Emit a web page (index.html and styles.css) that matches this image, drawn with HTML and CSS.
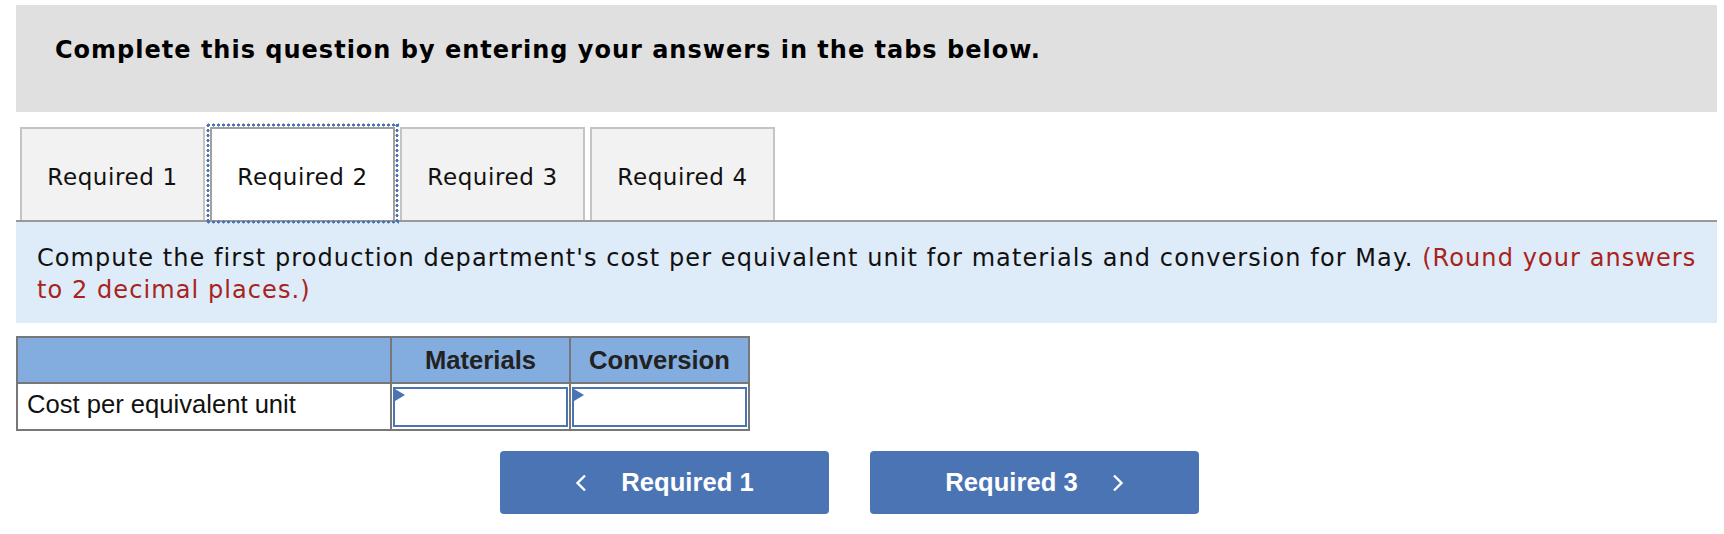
FILE: index.html
```html
<!DOCTYPE html>
<html lang="en">
<head>
    <meta charset="UTF-8">
    <title>Required 2</title>
    <link rel="stylesheet" href="styles.css">
</head>
<body>
    <div class="question">
        <div class="banner">Complete this question by entering your answers in the tabs below.</div>

        <div class="tabs">
            <div class="tab">Required 1</div>
            <div class="tab active">Required 2</div>
            <div class="tab">Required 3</div>
            <div class="tab">Required 4</div>
        </div>

        <div class="prompt">
            Compute the first production department's cost per equivalent unit for materials and conversion for May.
            <span class="hint">(Round your answers to 2 decimal places.)</span>
        </div>

        <table class="answer-table">
            <colgroup>
                <col class="col-label">
                <col class="col-value">
                <col class="col-value">
            </colgroup>
            <tr>
                <th></th>
                <th>Materials</th>
                <th>Conversion</th>
            </tr>
            <tr>
                <td class="label">Cost per equivalent unit</td>
                <td class="entry"><div class="field"><input type="text"></div></td>
                <td class="entry"><div class="field"><input type="text"></div></td>
            </tr>
        </table>

        <div class="nav">
            <button type="button" class="nav-btn">
                <svg width="12" height="18" viewBox="0 0 12 18"><polyline points="10,1.5 2.5,9 10,16.5" fill="none" stroke="#fff" stroke-width="2.4"/></svg>
                <span>Required 1</span>
            </button>
            <button type="button" class="nav-btn">
                <span>Required 3</span>
                <svg width="12" height="18" viewBox="0 0 12 18"><polyline points="2,1.5 9.5,9 2,16.5" fill="none" stroke="#fff" stroke-width="2.4"/></svg>
            </button>
        </div>
    </div>
</body>
</html>
```

FILE: styles.css
```css
body {
    margin: 5px 7px 0 16px;
    background-color: #fff;
    font-family: "DejaVu Sans", Verdana, sans-serif;
    color: #000;
}
.banner {
    background-color: #e0e0e0;
    padding: 31px 39px 48px;
    font-weight: bold;
    font-size: 24px;
    letter-spacing: 1px;
    line-height: 28px;
}
.tabs {
    display: flex;
    gap: 5px;
    margin-top: 15px;
    padding-left: 4px;
    border-bottom: 2px solid #999;
}
.tab {
    position: relative;
    width: 185px;
    height: 93px;
    box-sizing: border-box;
    display: flex;
    align-items: center;
    justify-content: center;
    padding-top: 4px;
    background-color: #f2f2f2;
    border: 2px solid #c4c4c4;
    border-bottom: none;
    font-size: 23px;
    letter-spacing: 0.6px;
    color: #111;
}
.tab.active {
    background-color: #fff;
    border-color: #a0a0a0;
}
/* dotted focus ring */
.tab.active::after {
    content: "";
    position: absolute;
    left: -6px;
    right: -6px;
    top: -6px;
    bottom: -4px;
    background:
        radial-gradient(circle, #4a74b4 1.3px, transparent 1.8px) top left / 5px 4px repeat-x,
        radial-gradient(circle, #4a74b4 1.3px, transparent 1.8px) bottom left / 5px 4px repeat-x,
        radial-gradient(circle, #4a74b4 1.3px, transparent 1.8px) top left / 4px 5px repeat-y,
        radial-gradient(circle, #4a74b4 1.3px, transparent 1.8px) top right / 4px 5px repeat-y;
    pointer-events: none;
}
.prompt {
    background-color: #deebf8;
    padding: 21px 8px 17px 21px;
    font-size: 24px;
    letter-spacing: 1.08px;
    line-height: 31.5px;
    color: #111;
}
.hint {
    color: #a8231c;
}
.answer-table {
    margin-top: 13px;
    border-collapse: collapse;
    table-layout: fixed;
    width: 732px;
    font-family: "Liberation Sans", Arial, sans-serif;
    font-size: 25.6px;
    border: 2px solid #777;
}
.col-label {
    width: 374px;
}
.col-value {
    width: 179px;
}
.answer-table th {
    background-color: #83acdf;
    border: 2px solid #777;
    height: 44px;
    padding: 0;
    color: #222;
    font-weight: bold;
}
.answer-table td {
    border: 2px solid #777;
    height: 40px;
    padding: 0;
}
.answer-table td.label {
    padding: 0 9px 5px;
    color: #111;
}
.answer-table td.entry {
    padding: 0 1px;
}
.field {
    position: relative;
}
.field::before {
    content: "";
    position: absolute;
    left: 2px;
    top: 2px;
    border-left: 10px solid #4a74b4;
    border-top: 6px solid transparent;
    border-bottom: 6px solid transparent;
}
.field input {
    display: block;
    width: 100%;
    height: 40px;
    box-sizing: border-box;
    border: 2px solid #4a74b4;
    margin: 0;
    padding: 0 8px;
    font-size: 20px;
}
.nav {
    display: flex;
    gap: 41px;
    margin-top: 20px;
    padding-left: 484px;
}
.nav-btn {
    width: 329px;
    height: 63px;
    display: flex;
    align-items: center;
    justify-content: center;
    gap: 34px;
    background-color: #4a74b4;
    color: #fff;
    border: none;
    border-radius: 4px;
    font-family: "Liberation Sans", Arial, sans-serif;
    font-weight: bold;
    font-size: 25.6px;
    cursor: pointer;
}
```
